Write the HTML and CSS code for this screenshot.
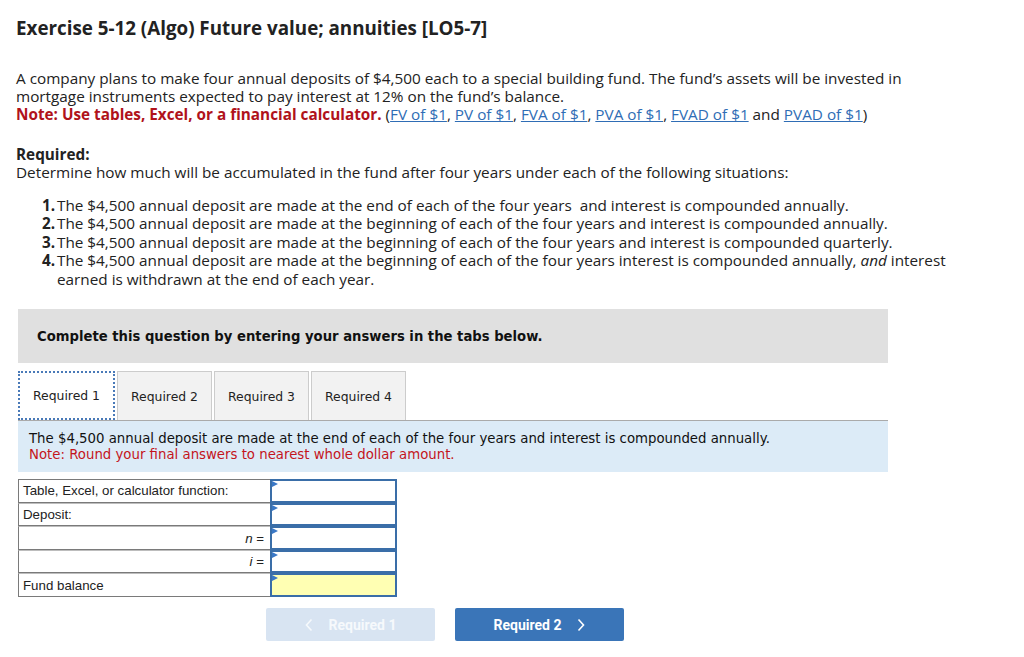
FILE: index.html
```html
<!DOCTYPE html>
<html>
<head>
<meta charset="utf-8">
<link rel="stylesheet" href="styles.css">
</head>
<body>
<div class="page">
  <h1 class="title">Exercise 5-12 (Algo) Future value; annuities [LO5-7]</h1>
  <p class="intro">A company plans to make four annual deposits of $4,500 each to a special building fund. The fund’s assets will be invested in mortgage instruments expected to pay interest at 12% on the fund’s balance.<br><span class="note">Note: Use tables, Excel, or a financial calculator.</span> (<a href="#">FV of $1</a>, <a href="#">PV of $1</a>, <a href="#">FVA of $1</a>, <a href="#">PVA of $1</a>, <a href="#">FVAD of $1</a> and <a href="#">PVAD of $1</a>)</p>
  <p class="req"><b>Required:</b><br>Determine how much will be accumulated in the fund after four years under each of the following situations:</p>
  <ol class="list">
    <li><b>1.</b><span>The $4,500 annual deposit are made at the end of each of the four years &nbsp;and interest is compounded annually.</span></li>
    <li><b>2.</b><span>The $4,500 annual deposit are made at the beginning of each of the four years and interest is compounded annually.</span></li>
    <li><b>3.</b><span>The $4,500 annual deposit are made at the beginning of each of the four years and interest is compounded quarterly.</span></li>
    <li><b>4.</b><span>The $4,500 annual deposit are made at the beginning of each of the four years interest is compounded annually, <i>and</i> interest earned is withdrawn at the end of each year.</span></li>
  </ol>

  <div class="widget">
    <div class="banner">Complete this question by entering your answers in the tabs below.</div>
    <div class="tabs">
      <div class="tab active">Required 1</div>
      <div class="tab">Required 2</div>
      <div class="tab">Required 3</div>
      <div class="tab">Required 4</div>
    </div>
    <div class="instr">
      <div>The $4,500 annual deposit are made at the end of each of the four years and interest is compounded annually.</div>
      <div class="instr-note">Note: Round your final answers to nearest whole dollar amount.</div>
    </div>
    <div class="grid">
      <div class="lbl">Table, Excel, or calculator function:</div><div class="inp"></div>
      <div class="lbl">Deposit:</div><div class="inp"></div>
      <div class="lbl right"><i>n</i>&nbsp;=</div><div class="inp"></div>
      <div class="lbl right"><i>i</i>&nbsp;=</div><div class="inp"></div>
      <div class="lbl">Fund balance</div><div class="inp yellow"></div>
    </div>
    <div class="nav">
      <div class="btn prev"><svg class="chev left" width="8" height="14" viewBox="0 0 8 14"><path d="M6.5 1.5 L1.5 7 L6.5 12.5" fill="none" stroke="currentColor" stroke-width="1.6"/></svg>Required 1</div>
      <div class="btn next">Required 2<svg class="chev right" width="8" height="14" viewBox="0 0 8 14"><path d="M1.5 1.5 L6.5 7 L1.5 12.5" fill="none" stroke="currentColor" stroke-width="1.6"/></svg></div>
    </div>
  </div>
</div>
</body>
</html>
```

FILE: styles.css
```css
html, body { margin: 0; padding: 0; background: #fff; }
body { font-family: "Open Sans", Roboto, sans-serif; color: #222; }
.page { padding: 17px 16px 0 16px; width: 940px; }
.title { margin: 0; font-size: 18.8px; font-weight: 700; line-height: 22px; color: #222; }
.intro { margin: 30px 0 0 0; font-size: 15.3px; line-height: 18px; }
.note { color: #b0121b; font-weight: 700; }
a { color: #2f6db5; text-decoration: underline; }
.req { margin: 22px 0 0 0; font-size: 15.3px; line-height: 18px; }
.list { list-style: none; margin: 15px 0 0 0; padding: 0 0 0 26px; font-size: 15.3px; line-height: 18.4px; }
.list li { display: flex; }
.list li b { width: 15px; flex: none; }
.widget { margin-top: 21px; width: 870px; margin-left: 2px; }
.banner { background: #e0e0e0; height: 54px; display: flex; align-items: center; padding-left: 19px; font-family: "DejaVu Sans", Verdana, sans-serif; font-weight: 700; font-size: 13.2px; color: #111; }
.tabs { display: flex; margin-top: 8px; height: 49px; border-bottom: 1px solid #aaa; gap: 2px; }
.tab { width: 93px; border: 1px solid #ccc; border-bottom: none; background: #f2f2f2; display: flex; align-items: center; justify-content: center; font-family: "DejaVu Sans", Verdana, sans-serif; font-size: 12.4px; color: #222; }
.tab.active { background: #fff; width: 97px; border: 2px dotted #4a7ab8; height: 49px; box-sizing: border-box; margin-bottom: -1px; }
.instr { background: #dcebf7; height: 51px; box-sizing: border-box; padding: 10px 0 0 11px; font-family: "DejaVu Sans", Verdana, sans-serif; font-size: 13.3px; line-height: 16px; color: #111; }
.instr-note { color: #c4151c; }
.grid { margin-top: 7px; display: grid; grid-template-columns: 252px 127px; width: 379px; font-family: "Liberation Sans", Arial, sans-serif; font-size: 13.3px; color: #222; }
.lbl { height: 23.6px; box-sizing: border-box; border: 1px solid #7a7a7a; border-top-color: #bdbdbd; border-right: none; padding: 0 4px; display: flex; align-items: center; }
.lbl:first-child { border-top-color: #7a7a7a; }
.lbl.right { justify-content: flex-end; padding-right: 6px; }
.inp { height: 23.6px; box-sizing: border-box; border: 2px solid #3a6ea8; position: relative; background: #fff; }
.inp::before { content: ""; position: absolute; left: 0; top: 0; border-left: 6px solid #3a78c6; border-top: 3.5px solid transparent; border-bottom: 3.5px solid transparent; }
.inp.yellow { background: #ffffb3; }
.nav { display: flex; gap: 20px; margin-top: 11px; margin-left: 248px; }
.btn { width: 169px; height: 33px; border-radius: 2px; display: flex; align-items: center; justify-content: center; font-weight: 700; font-size: 14px; color: #fff; font-family: Roboto, Lato, sans-serif; }
.btn.prev { background: #d8e4f2; color: #f6f9fc; }
.btn.next { background: #3a75b8; }
.chev.left { margin-right: 16px; }
.chev.right { margin-left: 16px; }
```
